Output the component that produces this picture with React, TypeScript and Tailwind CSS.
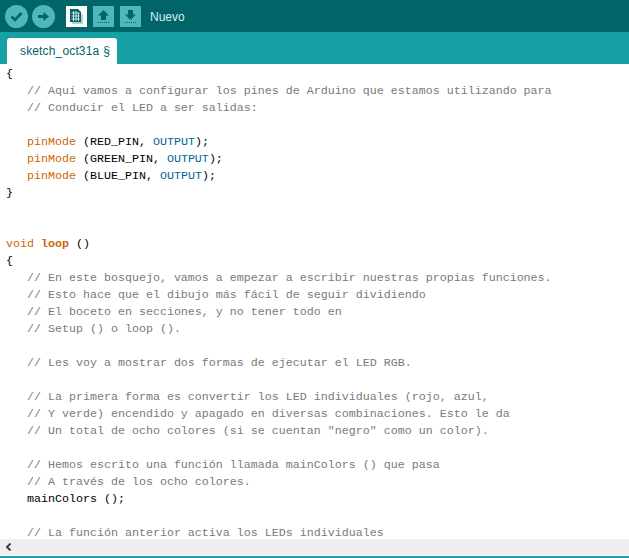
import React from 'react';

type Kind = 'c' | 'k' | 'b' | 'o' | 'p';
type Seg = [Kind, string];

const tone: Record<Kind, string> = {
  c: 'text-[#7a7a7a]',
  k: 'text-[#cc6600]',
  b: 'text-[#cc6600] font-bold',
  o: 'text-[#006699]',
  p: 'text-black',
};

const pin = (name: string): Seg[] => [
  ['k', '   pinMode'],
  ['p', ` (${name}, `],
  ['o', 'OUTPUT'],
  ['p', ');'],
];
const note = (text: string): Seg[] => [['c', `   // ${text}`]];

const lines: Seg[][] = [
  [['p', '{']],
  note('Aquí vamos a configurar los pines de Arduino que estamos utilizando para'),
  note('Conducir el LED a ser salidas:'),
  [],
  pin('RED_PIN'),
  pin('GREEN_PIN'),
  pin('BLUE_PIN'),
  [['p', '}']],
  [],
  [],
  [['k', 'void '], ['b', 'loop'], ['p', ' ()']],
  [['p', '{']],
  note('En este bosquejo, vamos a empezar a escribir nuestras propias funciones.'),
  note('Esto hace que el dibujo más fácil de seguir dividiendo'),
  note('El boceto en secciones, y no tener todo en'),
  note('Setup () o loop ().'),
  [],
  note('Les voy a mostrar dos formas de ejecutar el LED RGB.'),
  [],
  note('La primera forma es convertir los LED individuales (rojo, azul,'),
  note('Y verde) encendido y apagado en diversas combinaciones. Esto le da'),
  note('Un total de ocho colores (si se cuentan "negro" como un color).'),
  [],
  note('Hemos escrito una función llamada mainColors () que pasa'),
  note('A través de los ocho colores.'),
  [['p', '   mainColors ();']],
  [],
  note('La función anterior activa los LEDs individuales'),
];

const RoundButton: React.FC<{ children: React.ReactNode }> = ({ children }) => (
  <div className="w-[23px] h-[23px] rounded-full bg-[#4db7bb] flex items-center justify-center">
    {children}
  </div>
);

const SquareButton: React.FC<{ children: React.ReactNode; active?: boolean }> = ({ children, active }) => (
  <div className={`w-[21px] h-[21px] flex items-center justify-center ${active ? 'bg-white' : 'bg-[#4db7bb]'}`}>
    {children}
  </div>
);

const App: React.FC = () => {
  return (
    <div className="w-[629px] h-[558px] flex flex-col overflow-hidden bg-white">
      <div className="h-8 bg-[#006468] flex items-center pl-[5px] pt-px">
        <div className="flex gap-1">
          <RoundButton>
            <svg width="13" height="11" viewBox="0 0 13 11">
              <path d="M1.5 5.5 L5 9 L11.5 2" fill="none" stroke="#006468" strokeWidth="2.6" />
            </svg>
          </RoundButton>
          <RoundButton>
            <svg width="13" height="11" viewBox="0 0 13 11">
              <path d="M1 4 H6.5 V1 L12 5.5 L6.5 10 V7 H1 Z" fill="#006468" />
            </svg>
          </RoundButton>
        </div>
        <div className="flex gap-[6px] ml-[11px]">
          <SquareButton active>
            <svg width="15" height="15" viewBox="0 0 15 15">
              <path d="M3 4 V15 H14 V6 L12 4 Z" fill="#a9d8da" />
              <path d="M1 0 H9 L12 3 V13 H1 Z" fill="#006468" />
              <path d="M2.5 4 H10.5 M2.5 7 H10.5 M2.5 10 H10.5 M4.5 2 V12 M7 2 V12 M9.5 4 V12" stroke="#ffffff" strokeWidth="0.8" />
            </svg>
          </SquareButton>
          <SquareButton>
            <svg width="15" height="15" viewBox="0 0 15 15">
              <path d="M7.5 1 L13 6.5 H10 V11 H5 V6.5 H2 Z" fill="#006468" />
              <path d="M2 13.5 H13" stroke="#006468" strokeWidth="1" strokeDasharray="1 1" />
            </svg>
          </SquareButton>
          <SquareButton>
            <svg width="15" height="15" viewBox="0 0 15 15">
              <path d="M5 1 H10 V5.5 H13 L7.5 11 L2 5.5 H5 Z" fill="#006468" />
              <path d="M2 13.5 H13" stroke="#006468" strokeWidth="1" strokeDasharray="1 1" />
            </svg>
          </SquareButton>
        </div>
        <span className="ml-[9px] mt-px text-xs text-[#d6eeee] font-['Liberation_Sans',sans-serif]">Nuevo</span>
      </div>

      <div className="h-8 bg-[#17a1a5] flex items-end pl-[7px]">
        <div className="w-[110px] h-[26px] bg-white rounded-t-[3px] flex items-center gap-1 pl-[13px] pb-px text-xs text-[#006468] font-['Liberation_Sans',sans-serif]">
          <span className="tracking-[0.15px]">sketch_oct31a</span>
          <span>§</span>
        </div>
      </div>

      <div className="h-[475px] overflow-hidden pl-[6px] pt-[2px] font-['Liberation_Mono',monospace] text-[11.67px] leading-[17px] whitespace-pre">
        {lines.map((line, i) => (
          <div key={i} className="h-[17px]">
            {line.map(([kind, text], j) => (
              <span key={j} className={tone[kind]}>{text}</span>
            ))}
          </div>
        ))}
      </div>

      <div className="h-4 bg-[#eeeeee] flex items-center pl-[5px]">
        <svg width="7" height="8" viewBox="0 0 7 8">
          <path d="M5.5 0.5 L2 4 L5.5 7.5" fill="none" stroke="#404040" strokeWidth="2" />
        </svg>
      </div>
      <div className="h-px bg-white" />
      <div className="h-[2px] bg-[#17a1a5]" />
    </div>
  );
};

export default App;
